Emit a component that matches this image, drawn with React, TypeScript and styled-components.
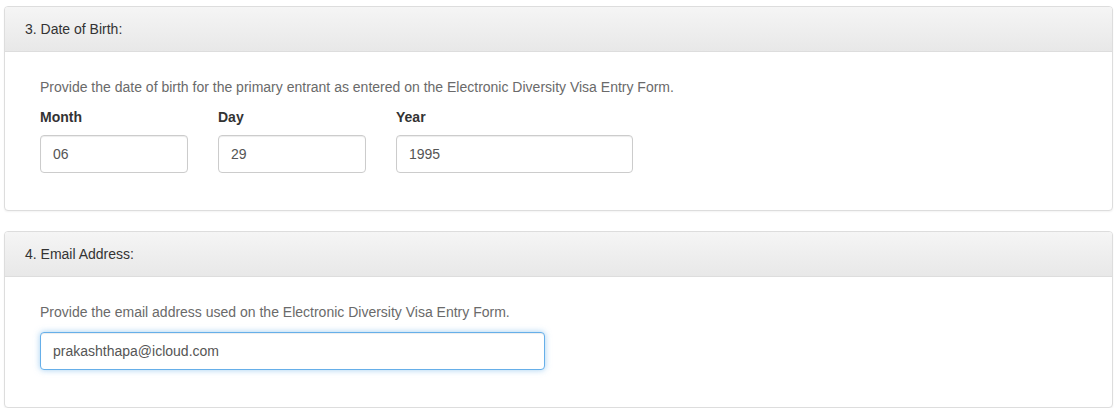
import React from 'react';
import styled, {createGlobalStyle} from "styled-components";

const GlobalStyle = createGlobalStyle`
  html, body {
    margin: 0;
    padding: 0;
    background: #fff;
  }
  body {
    font-family: "Liberation Sans", Arial, sans-serif;
    font-size: 14px;
    color: #333;
  }
`

type FieldType = {
    label: string
    value: string
    width: number
}

const dateFields: FieldType[] = [
    {label: 'Month', value: '06', width: 148},
    {label: 'Day', value: '29', width: 148},
    {label: 'Year', value: '1995', width: 237},
]

export default function App() {
    //map
    const mappedFields = dateFields.map((f) => (
        <Field key={f.label}>
            <Label>{f.label}</Label>
            <Input $width={f.width} defaultValue={f.value} readOnly/>
        </Field>
    ))

    return (
        <Page>
            <GlobalStyle/>
            <Panel>
                <Heading>3. Date of Birth:</Heading>
                <Body>
                    <Hint>Provide the date of birth for the primary entrant as entered on the Electronic Diversity Visa Entry Form.</Hint>
                    <FieldRow>
                        {mappedFields}
                    </FieldRow>
                </Body>
            </Panel>
            <Panel>
                <Heading>4. Email Address:</Heading>
                <Body>
                    <Hint>Provide the email address used on the Electronic Diversity Visa Entry Form.</Hint>
                    <Input $width={505} $focused defaultValue={'prakashthapa@icloud.com'} readOnly/>
                </Body>
            </Panel>
        </Page>
    );
}

const Page = styled.div`
  padding: 6px 6px 0 4px;
  display: flex;
  flex-direction: column;
  gap: 20px;
`

const Panel = styled.section`
  border: 1px solid #ddd;
  border-radius: 4px;
  background: #fff;
  box-shadow: 0 1px 2px rgba(0, 0, 0, 0.05);
  overflow: hidden;
`

const Heading = styled.div`
  height: 45px;
  box-sizing: border-box;
  padding: 0 20px;
  display: flex;
  align-items: center;
  background: linear-gradient(to bottom, #f5f5f5 0%, #e8e8e8 100%);
  border-bottom: 1px solid #ddd;
  color: #333;
  font-size: 14px;
`

const Body = styled.div`
  padding: 25px 35px 37px;
`

const Hint = styled.p`
  margin: 0 0 10px;
  line-height: 20px;
  color: #6a6a6a;
`

const FieldRow = styled.div`
  display: flex;
  gap: 30px;
`

const Field = styled.div`
  display: flex;
  flex-direction: column;
`

const Label = styled.label`
  font-weight: bold;
  line-height: 20px;
  color: #333;
  margin-bottom: 8px;
`

const Input = styled.input<{ $width: number, $focused?: boolean }>`
  width: ${p => p.$width}px;
  height: 38px;
  box-sizing: border-box;
  padding: 0 12px;
  font-family: "Liberation Sans", Arial, sans-serif;
  font-size: 14px;
  color: #555;
  background: #fff;
  border: 1px solid ${p => p.$focused ? '#66afe9' : '#ccc'};
  border-radius: 4px;
  outline: none;
  box-shadow: ${p => p.$focused
    ? 'inset 0 1px 1px rgba(0,0,0,.075), 0 0 6px rgba(102,175,233,.6)'
    : 'inset 0 1px 1px rgba(0,0,0,.075)'};
`
